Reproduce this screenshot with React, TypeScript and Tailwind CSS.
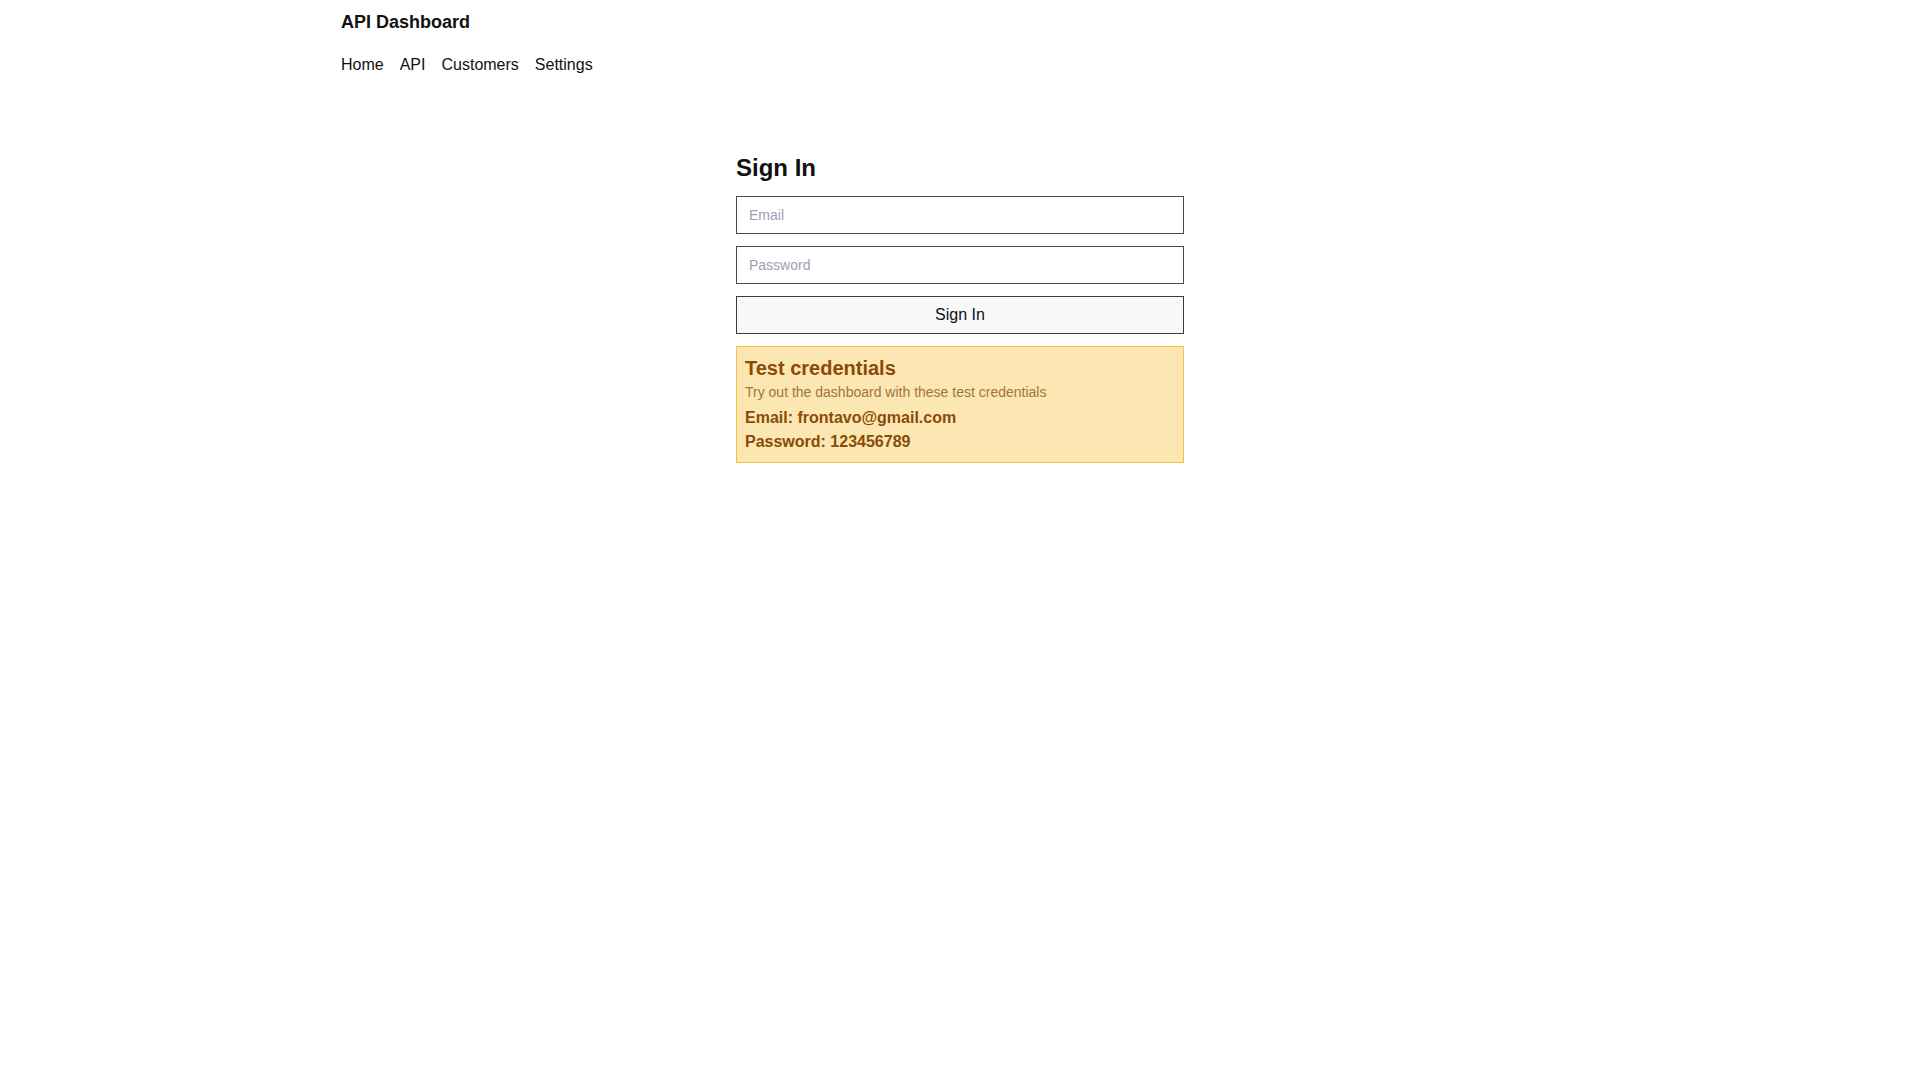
import React from 'react';

const App: React.FC = () => {
  return (
    <div className="min-h-screen bg-white text-[#111111] font-['Liberation_Sans',Arial,sans-serif]">
      <header className="max-w-7xl mx-auto px-[21px] pt-2">
        <h1 className="text-lg font-bold leading-7">API Dashboard</h1>
        <nav className="mt-[17px] flex gap-4 text-base leading-6">
          <a href="#">Home</a>
          <a href="#">API</a>
          <a href="#">Customers</a>
          <a href="#">Settings</a>
        </nav>
      </header>

      <main className="max-w-md mx-auto mt-[75px] flex flex-col gap-3">
        <h2 className="text-2xl font-bold leading-8">Sign In</h2>
        <input
          type="email"
          placeholder="Email"
          className="w-full border border-[#4a4a58] px-3 py-2 text-sm leading-5 placeholder:text-[#9ca0b0] outline-none"
        />
        <input
          type="password"
          placeholder="Password"
          className="w-full border border-[#4a4a58] px-3 py-2 text-sm leading-5 placeholder:text-[#9ca0b0] outline-none"
        />
        <button className="w-full border border-[#3a3a44] bg-[#f8f8f8] py-1.5 text-base leading-6">
          Sign In
        </button>

        <div className="border border-[#f5c346] bg-[#fce7b2] px-2 pt-[7px] pb-2">
          <h3 className="text-xl font-bold leading-7 text-[#8a4b08]">Test credentials</h3>
          <p className="text-sm leading-5 text-[#a27438]">Try out the dashboard with these test credentials</p>
          <p className="mt-1 text-base font-bold leading-6 text-[#8a4b08]">Email: frontavo@gmail.com</p>
          <p className="text-base font-bold leading-6 text-[#8a4b08]">Password: 123456789</p>
        </div>
      </main>
    </div>
  );
};

export default App;
